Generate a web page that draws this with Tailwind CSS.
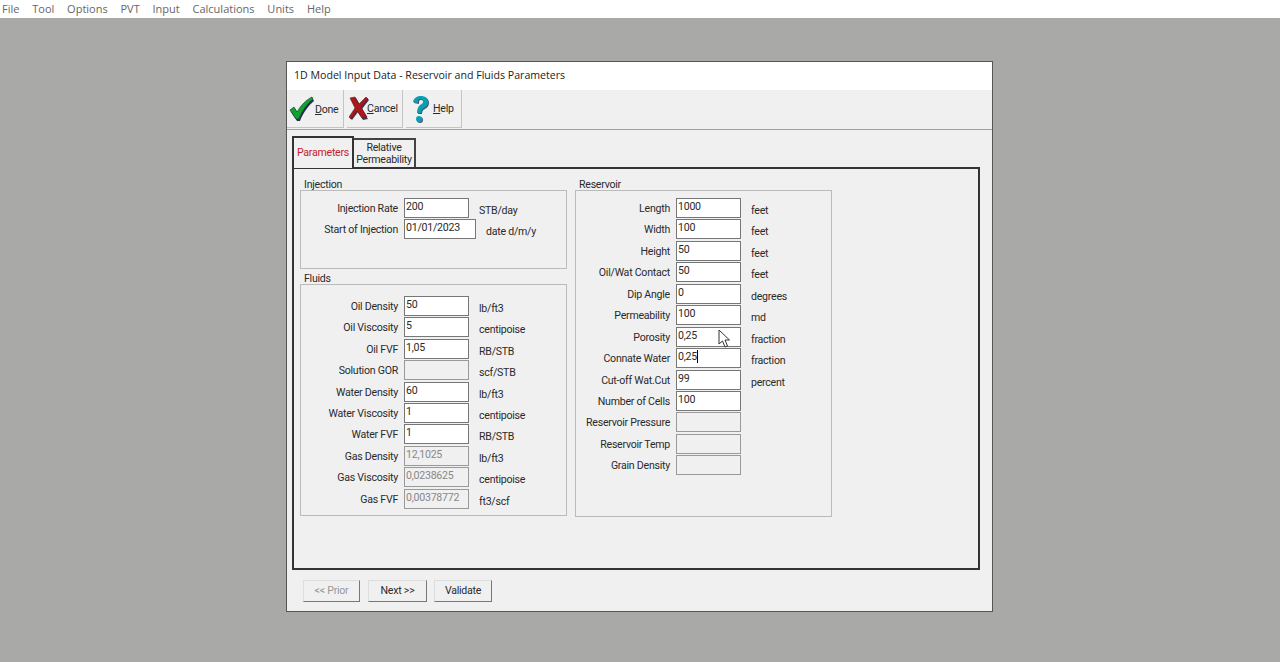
<!DOCTYPE html>
<html lang="en">
<head>
<meta charset="UTF-8">
<title>1D Model Input Data</title>
<script src="https://cdn.jsdelivr.net/npm/@tailwindcss/browser@4"></script>
</head>
<body class="h-[662px] w-[1280px] overflow-hidden bg-[#a9a9a7] font-['Roboto',sans-serif] text-[10.600px] leading-[14px] tracking-[-0.25px] text-[#2a2a2a]">

<!-- menu bar -->
<div class="flex h-[18px] items-center gap-[12.800px] bg-white pb-[1px] pl-[2px] font-['Open_Sans',sans-serif] text-[11px] tracking-normal text-[#666]">
  <span>File</span><span>Tool</span><span>Options</span><span>PVT</span><span>Input</span><span>Calculations</span><span>Units</span><span>Help</span>
</div>

<!-- dialog -->
<div class="ml-[286px] mt-[43px] flex h-[551px] w-[707px] flex-col border border-[#555] bg-[#f0f0f0]">
  <div class="flex h-[28px] items-center bg-white pb-[2px] pl-[7px] font-['Open_Sans',sans-serif] text-[10.600px] tracking-normal text-[#222]">1D Model Input Data - Reservoir and Fluids Parameters</div>

  <!-- toolbar -->
  <div class="flex h-[40px] gap-[2px] border-b border-[#a0a0a0]">
    <div class="flex h-[38px] w-[57px] items-center border-r border-b border-[#c4c4c4]">
      <svg class="ml-[2px] shrink-0" width="26" height="26" viewBox="0 0 26 26"><path d="M2 16l4-3 3 5C13 11 18 6 24 3l1 2C19 10 14 17 11 25H8z" fill="#2a2a5c"/><path d="M1 14l4-3 3 5C12 9 17 4 23 1l1 2C18 8 13 15 10 23H7z" fill="#12a030" stroke="#0b4a20" stroke-width=".7"/></svg>
      <span class="mt-[3px]"><span class="underline">D</span>one</span>
    </div>
    <div class="ml-[1px] flex h-[38px] w-[56px] items-center border-r border-b border-[#c4c4c4]">
      <svg class="ml-[2px] shrink-0" width="21" height="25" viewBox="0 0 21 25"><path d="M2 3l5-1 4 7 7-7 2 2-7 9 6 10-5 1-5-8-6 8-2-2 6-9z" fill="#3a3a5a"/><path d="M1 2l5-1 4 7 7-7 2 2-7 8 6 10-5 1-5-7-6 8-2-2 6-9z" fill="#a8181c" stroke="#6a1418" stroke-width=".6"/></svg>
      <span class="-ml-[3px] mt-[1px]"><span class="underline">C</span>ancel</span>
    </div>
    <div class="ml-[1px] flex h-[38px] w-[56px] items-center border-r border-b border-[#c4c4c4]">
      <svg class="ml-[5px] shrink-0" width="18" height="28" viewBox="0 0 18 28"><path d="M3 8C4 3 8 2 11 2c4 0 7 2 7 6 0 3-2 5-4 6-2 1-3 2-3 5H7c0-4 1-6 3-8 2-1 3-2 3-3 0-2-1-3-3-3S8 6 8 9z" fill="#3a5a80"/><circle cx="9" cy="25" r="3" fill="#3a5a80"/><path d="M2 7C3 2 7 1 10 1c4 0 7 2 7 6 0 3-2 5-4 6-2 1-3 2-3 5H6c0-4 1-6 3-8 2-1 3-2 3-3 0-2-1-3-3-3S7 5 7 8z" fill="#0aa0ae"/><circle cx="8" cy="24" r="3" fill="#0aa0ae"/></svg>
      <span class="ml-[4px] mt-[1px]"><span class="underline">H</span>elp</span>
    </div>
  </div>

  <!-- tabs -->
  <div class="ml-[5px] mt-[6px] flex h-[31px] items-end">
    <div class="relative z-10 -mb-px flex h-[32px] w-[62px] items-center justify-center border-2 border-b-0 border-[#333] bg-[#f0f0f0] text-[#c8202c]">Parameters</div>
    <div class="flex h-[29px] w-[62px] items-center justify-center border-2 border-b-0 border-l-0 border-[#444] pt-[1px] text-center leading-[12px]">Relative<br>Permeability</div>
  </div>

  <!-- tab page -->
  <div class="ml-[5px] flex h-[403px] w-[688px] gap-[8px] border-2 border-[#333] pl-[6px] pt-[9px]">
    <div class="w-[267px]">
      <div class="pl-[4px] pt-[1px] leading-[11px]">Injection</div>
      <div class="h-[79px] border border-[#bbb] pt-[7px]">
        <div class="grid auto-rows-[21.4px] grid-cols-[97px_auto] gap-x-[6px] whitespace-nowrap">
          <span class="text-right leading-[21px]">Injection Rate</span>
          <div class="flex"><div class="h-[20px] w-[65px] border border-[#777] bg-white pl-[1px] leading-[15px]">200</div><span class="ml-[10px] pt-[6px]">STB/day</span></div>
          <span class="text-right leading-[21px]">Start of Injection</span>
          <div class="flex"><div class="h-[20px] w-[72px] border border-[#777] bg-white pl-[1px] leading-[15px]">01/01/2023</div><span class="ml-[10px] pt-[6px]">date d/m/y</span></div>
        </div>
      </div>
      <div class="mt-[3px] pl-[4px] pt-[1px] leading-[11px]">Fluids</div>
      <div class="h-[232px] border border-[#bbb] pt-[11px]">
        <div class="grid auto-rows-[21.4px] grid-cols-[97px_auto] gap-x-[6px] whitespace-nowrap">
          <span class="text-right leading-[21px]">Oil Density</span>
          <div class="flex"><div class="h-[20px] w-[65px] border border-[#777] bg-white pl-[1px] leading-[16px]">50</div><span class="ml-[10px] pt-[6px]">lb/ft3</span></div>
          <span class="text-right leading-[21px]">Oil Viscosity</span>
          <div class="flex"><div class="h-[20px] w-[65px] border border-[#777] bg-white pl-[1px] leading-[16px]">5</div><span class="ml-[10px] pt-[6px]">centipoise</span></div>
          <span class="text-right leading-[21px]">Oil FVF</span>
          <div class="flex"><div class="h-[20px] w-[65px] border border-[#777] bg-white pl-[1px] leading-[16px]">1,05</div><span class="ml-[10px] pt-[6px]">RB/STB</span></div>
          <span class="text-right leading-[21px]">Solution GOR</span>
          <div class="flex"><div class="h-[20px] w-[65px] border border-[#999] pl-[1px] leading-[16px]"></div><span class="ml-[10px] pt-[6px]">scf/STB</span></div>
          <span class="text-right leading-[21px]">Water Density</span>
          <div class="flex"><div class="h-[20px] w-[65px] border border-[#777] bg-white pl-[1px] leading-[16px]">60</div><span class="ml-[10px] pt-[6px]">lb/ft3</span></div>
          <span class="text-right leading-[21px]">Water Viscosity</span>
          <div class="flex"><div class="h-[20px] w-[65px] border border-[#777] bg-white pl-[1px] leading-[16px]">1</div><span class="ml-[10px] pt-[6px]">centipoise</span></div>
          <span class="text-right leading-[21px]">Water FVF</span>
          <div class="flex"><div class="h-[20px] w-[65px] border border-[#777] bg-white pl-[1px] leading-[16px]">1</div><span class="ml-[10px] pt-[6px]">RB/STB</span></div>
          <span class="text-right leading-[21px]">Gas Density</span>
          <div class="flex"><div class="h-[20px] w-[65px] border border-[#999] pl-[1px] leading-[16px] text-[#888]">12,1025</div><span class="ml-[10px] pt-[6px]">lb/ft3</span></div>
          <span class="text-right leading-[21px]">Gas Viscosity</span>
          <div class="flex"><div class="h-[20px] w-[65px] border border-[#999] pl-[1px] leading-[16px] text-[#888]">0,0238625</div><span class="ml-[10px] pt-[6px]">centipoise</span></div>
          <span class="text-right leading-[21px]">Gas FVF</span>
          <div class="flex"><div class="h-[20px] w-[65px] border border-[#999] pl-[1px] leading-[16px] text-[#888]">0,00378772</div><span class="ml-[10px] pt-[6px]">ft3/scf</span></div>
        </div>
      </div>
    </div>

    <div class="w-[257px]">
      <div class="pl-[4px] pt-[1px] leading-[11px]">Reservoir</div>
      <div class="h-[327px] border border-[#bbb] pt-[7px]">
        <div class="grid auto-rows-[21.45px] grid-cols-[94px_auto] gap-x-[6px] whitespace-nowrap">
          <span class="text-right leading-[21px]">Length</span>
          <div class="flex"><div class="h-[20px] w-[65px] border border-[#777] bg-white pl-[1px] leading-[15px]">1000</div><span class="ml-[10px] pt-[6px]">feet</span></div>
          <span class="text-right leading-[21px]">Width</span>
          <div class="flex"><div class="h-[20px] w-[65px] border border-[#777] bg-white pl-[1px] leading-[15px]">100</div><span class="ml-[10px] pt-[6px]">feet</span></div>
          <span class="text-right leading-[21px]">Height</span>
          <div class="flex"><div class="h-[20px] w-[65px] border border-[#777] bg-white pl-[1px] leading-[15px]">50</div><span class="ml-[10px] pt-[6px]">feet</span></div>
          <span class="text-right leading-[21px]">Oil/Wat Contact</span>
          <div class="flex"><div class="h-[20px] w-[65px] border border-[#777] bg-white pl-[1px] leading-[15px]">50</div><span class="ml-[10px] pt-[6px]">feet</span></div>
          <span class="text-right leading-[21px]">Dip Angle</span>
          <div class="flex"><div class="h-[20px] w-[65px] border border-[#777] bg-white pl-[1px] leading-[15px]">0</div><span class="ml-[10px] pt-[6px]">degrees</span></div>
          <span class="text-right leading-[21px]">Permeability</span>
          <div class="flex"><div class="h-[20px] w-[65px] border border-[#777] bg-white pl-[1px] leading-[15px]">100</div><span class="ml-[10px] pt-[6px]">md</span></div>
          <span class="text-right leading-[21px]">Porosity</span>
          <div class="flex"><div class="relative h-[20px] w-[65px] border border-[#777] bg-white pl-[1px] leading-[15px]">0,25
            <svg class="absolute left-[41px] top-[1px]" width="14" height="19" viewBox="0 0 14 19"><path d="M1 1v14l3.500-3 2.500 6 2.500-1-2.500-6h4.500z" fill="#fff" stroke="#333" stroke-width="1"/></svg>
          </div><span class="ml-[10px] pt-[6px]">fraction</span></div>
          <span class="text-right leading-[21px]">Connate Water</span>
          <div class="flex"><div class="flex h-[20px] w-[65px] border border-[#777] bg-white pl-[1px] leading-[15px]">0,25<span class="mt-[1px] h-[13px] w-px bg-black"></span></div><span class="ml-[10px] pt-[6px]">fraction</span></div>
          <span class="text-right leading-[21px]">Cut-off Wat.Cut</span>
          <div class="flex"><div class="h-[20px] w-[65px] border border-[#777] bg-white pl-[1px] leading-[15px]">99</div><span class="ml-[10px] pt-[6px]">percent</span></div>
          <span class="text-right leading-[21px]">Number of Cells</span>
          <div class="flex"><div class="h-[20px] w-[65px] border border-[#777] bg-white pl-[1px] leading-[15px]">100</div></div>
          <span class="text-right leading-[21px]">Reservoir Pressure</span>
          <div class="flex"><div class="h-[20px] w-[65px] border border-[#999]"></div></div>
          <span class="text-right leading-[21px]">Reservoir Temp</span>
          <div class="flex"><div class="h-[20px] w-[65px] border border-[#999]"></div></div>
          <span class="text-right leading-[21px]">Grain Density</span>
          <div class="flex"><div class="h-[20px] w-[65px] border border-[#999]"></div></div>
        </div>
      </div>
    </div>
  </div>

  <!-- bottom buttons -->
  <div class="ml-[16px] mt-[10px] flex">
    <div class="flex h-[22px] w-[57px] items-center justify-center border border-[#ddd] border-r-[#777] border-b-[#777] text-[#999]">&lt;&lt; Prior</div>
    <div class="ml-[8px] flex h-[22px] w-[59px] items-center justify-center border border-[#ddd] border-r-[#777] border-b-[#777]">Next &gt;&gt;</div>
    <div class="ml-[7px] flex h-[22px] w-[58px] items-center justify-center border border-[#ddd] border-r-[#777] border-b-[#777]">Validate</div>
  </div>
</div>
</body>
</html>
